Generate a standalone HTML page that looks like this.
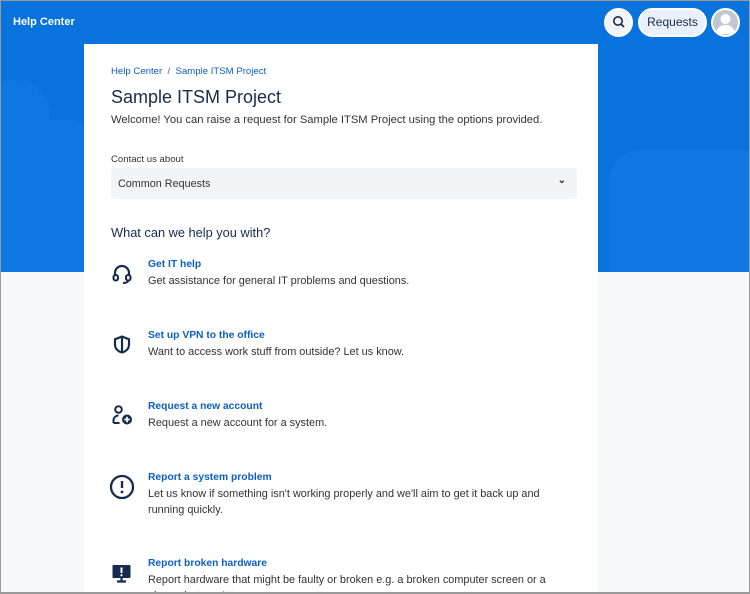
<!DOCTYPE html>
<html><head><meta charset="utf-8"><style>
*{box-sizing:border-box;margin:0;padding:0}
html,body{width:750px;height:594px;overflow:hidden}
body{font-family:"Liberation Sans",sans-serif;background:#f7f8f9;position:relative}
.frame{position:absolute;left:0;top:0;width:750px;height:594px;border:1px solid #9a9a9a;border-bottom-width:2px;pointer-events:none;z-index:5}
.hdr{position:absolute;left:0;top:0;width:750px;height:272px;background:#0872dd;overflow:hidden}
.cloud{position:absolute;background:#0d78e2;border-radius:50%}
.logo{position:absolute;left:13px;top:16px;color:#fff;font-weight:bold;font-size:11px}
.btn{position:absolute;top:8px;height:29px;border-radius:15px;border:2px solid #fff;background:#e9f0fb;font-size:12px;color:#172b4d;text-align:center;line-height:25px}
.card{position:absolute;left:84px;top:44px;width:514px;height:560px;background:#fff}
.a{color:#0c5fc2}
.crumb{position:absolute;left:27px;top:22px;font-size:9.6px}
h1{position:absolute;left:27px;top:43px;font-size:18px;font-weight:normal;color:#172b4d}
.wel{position:absolute;left:27px;top:70px;font-size:11.2px;color:#333}
.lbl{position:absolute;left:27px;top:110px;font-size:9.6px;color:#333}
.sel{position:absolute;left:27px;top:124px;width:466px;height:31px;background:#f3f4f6;border-radius:3px;font-size:10.8px;color:#333;padding:10px 7px}
.h2{position:absolute;left:27px;top:181px;font-size:12.8px;color:#172b4d}
.it{position:absolute;left:27px;width:450px}
.it svg{position:absolute;left:0;top:0}
.it .t{position:absolute;left:37px;top:0;font-size:10.3px;font-weight:bold;color:#0c5fc2;white-space:nowrap}
.it .d{position:absolute;left:37px;top:15px;font-size:10.9px;color:#333;line-height:15.5px;width:405px}
</style></head><body>
<div class="hdr">
<div class="cloud" style="left:-20px;top:80px;width:70px;height:70px"></div>
<div class="cloud" style="left:-10px;top:120px;width:100px;height:200px;border-radius:20px"></div>
<div class="cloud" style="left:610px;top:150px;width:160px;height:200px;border-radius:30px"></div>
<div class="logo">Help Center</div>
<div class="btn" style="left:604px;width:29px;background:#f2f4f7"><svg width="14" height="14" viewBox="0 0 14 14" style="margin-top:5px"><circle cx="6" cy="6" r="4.2" fill="none" stroke="#172b4d" stroke-width="1.6"/><path d="M9 9l3 3" stroke="#172b4d" stroke-width="1.6"/></svg></div>
<div class="btn" style="left:638px;width:69px">Requests</div>
<div class="btn" style="left:711px;width:29px;background:#c1c7d0;overflow:hidden"><svg width="25" height="25" viewBox="0 0 25 25"><circle cx="12.5" cy="9" r="5" fill="#fff"/><path d="M3 24c1-7 5-9 9.5-9s8.5 2 9.5 9z" fill="#fff"/></svg></div>
</div>
<div class="card">
<div class="crumb"><span class="a">Help Center</span> <span style="color:#666">&nbsp;/&nbsp;</span> <span class="a">Sample ITSM Project</span></div>
<h1>Sample ITSM Project</h1>
<div class="wel">Welcome! You can raise a request for Sample ITSM Project using the options provided.</div>
<div class="lbl">Contact us about</div>
<div class="sel">Common Requests<span style="position:absolute;right:11px;top:7px;font-size:10px;font-weight:bold">&#8964;</span></div>
<div class="h2">What can we help you with?</div>
<div class="it" style="top:215px"><svg width="22" height="22" viewBox="0 0 22 22" style="top:4px"><path d="M4 13v-3a7 7 0 0114 0v3" fill="none" stroke="#172b4d" stroke-width="2.2"/><rect x="2.5" y="12" width="4.5" height="5.5" rx="2" fill="none" stroke="#172b4d" stroke-width="2"/><rect x="15" y="12" width="4.5" height="5.5" rx="2" fill="none" stroke="#172b4d" stroke-width="2"/><path d="M17 17.5q0 2.5-5 2.5" fill="none" stroke="#172b4d" stroke-width="2"/></svg><div class="t">Get IT help</div><div class="d">Get assistance for general IT problems and questions.</div></div>
<div class="it" style="top:286px"><svg width="22" height="22" viewBox="0 0 22 22" style="top:4px"><path d="M11 2.5l7 2.8v5.2c0 4.5-3.5 7-7 8-3.5-1-7-3.5-7-8v-5.2z" fill="none" stroke="#172b4d" stroke-width="2.2"/><path d="M11 3.5v14.5" stroke="#172b4d" stroke-width="2.2"/></svg><div class="t">Set up VPN to the office</div><div class="d">Want to access work stuff from outside? Let us know.</div></div>
<div class="it" style="top:357px"><svg width="24" height="24" viewBox="0 0 24 24" style="top:3px"><circle cx="7.5" cy="5.5" r="3.3" fill="none" stroke="#172b4d" stroke-width="2"/><path d="M2.5 19v-2.5a5 5 0 015-5" fill="none" stroke="#172b4d" stroke-width="2"/><path d="M2.5 19h6" stroke="#172b4d" stroke-width="2"/><circle cx="16" cy="15.5" r="5" fill="#172b4d"/><path d="M16 12.8v5.4M13.3 15.5h5.4" stroke="#fff" stroke-width="1.7"/></svg><div class="t">Request a new account</div><div class="d">Request a new account for a system.</div></div>
<div class="it" style="top:428px"><svg width="26" height="26" viewBox="0 0 26 26" style="left:-2px;top:2px"><circle cx="13" cy="13" r="11" fill="none" stroke="#172b4d" stroke-width="2.3"/><path d="M13 7v7" stroke="#172b4d" stroke-width="2.4"/><circle cx="13" cy="18" r="1.4" fill="#172b4d"/></svg><div class="t">Report a system problem</div><div class="d">Let us know if something isn't working properly and we'll aim to get it back up and running quickly.</div></div>
<div class="it" style="top:514px"><svg width="22" height="22" viewBox="0 0 22 22" style="top:4px"><rect x="1.5" y="3" width="18" height="13" rx="1" fill="#172b4d"/><path d="M10.5 5.5v5.5" stroke="#fff" stroke-width="2"/><circle cx="10.5" cy="13.2" r="1.1" fill="#fff"/><path d="M10.5 16v3M6 19.5h9" stroke="#172b4d" stroke-width="2.2"/></svg><div class="t">Report broken hardware</div><div class="d">Report hardware that might be faulty or broken e.g. a broken computer screen or a phone that won't turn on.</div></div>
</div>
<div class="frame"></div>
</body></html>
